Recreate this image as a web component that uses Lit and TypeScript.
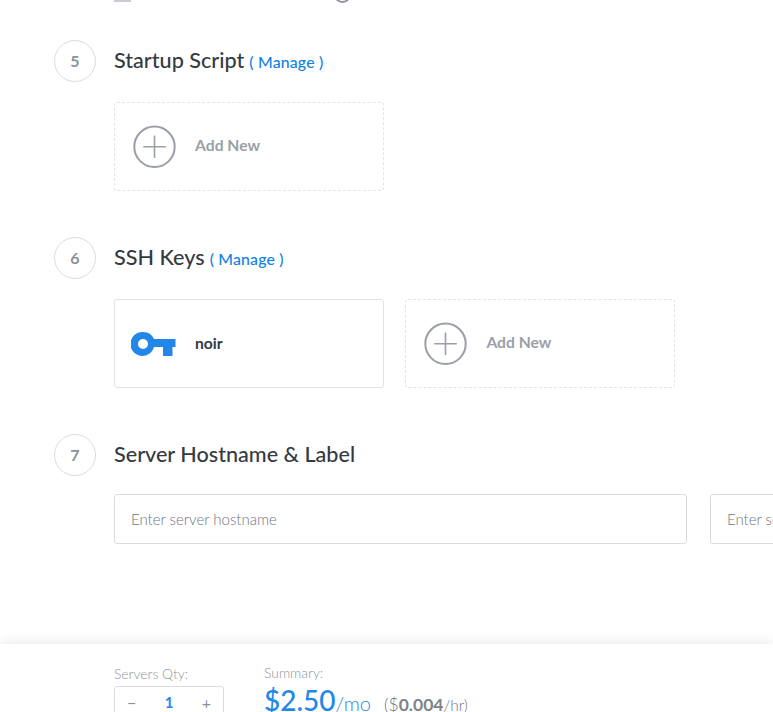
import { LitElement, html, css } from "lit";
import { customElement } from "lit/decorators.js";

const plus = html`<svg class="plus" width="44" height="44" viewBox="0 0 44 44" fill="none">
  <circle cx="21.5" cy="21.8" r="20.2" stroke="#9a9fa8" stroke-width="2"/>
  <path d="M21.5 10.5V33M10.3 21.8H32.8" stroke="#9a9fa8" stroke-width="1.6"/>
</svg>`;

const key = html`<svg width="45" height="24" viewBox="0 0 45 24">
  <path fill="#2387ea" fill-rule="evenodd" d="M12 0a12 12 0 0 1 11 7H44.500v8h-3v9H32V15H23A12 12 0 1 1 12 0Zm0 7a5 5 0 1 0 0 10a5 5 0 0 0 0-10Z"/>
</svg>`;

@customElement("app-root")
export class AppRoot extends LitElement {
  static styles = css`
    :host { display: block; }
    .page {
      width: 773px; height: 712px; overflow: hidden; background: #fff;
      display: flex; flex-direction: column;
      font-family: "Lato", "Liberation Sans", sans-serif;
      color: #353a42;
    }
    .main { height: 644px; flex: none; display: flex; flex-direction: column; box-sizing: border-box; }
    .clipped { height: 40px; flex: none; padding-left: 114px; display: flex; gap: 203px; overflow: hidden; }
    .clip-box { width: 17px; height: 2px; background: #c9ccd1; }
    .clip-ring { width: 13px; height: 13px; border: 2px solid #8f949c; border-radius: 50%; margin-top: -14px; }
    .section { display: flex; flex-direction: column; padding-left: 54px; }
    .section + .section { margin-top: 46px; }
    .head { display: flex; align-items: center; height: 42px; gap: 18px; }
    .num {
      width: 42px; height: 42px; box-sizing: border-box; border: 1px solid #d8dde2; border-radius: 50%;
      display: flex; align-items: center; justify-content: center; padding-bottom: 1px;
      font-size: 16px; font-weight: 700; color: #8a9199; flex: none;
    }
    .title { font-size: 21.6px; font-weight: 500; color: #353a42; white-space: nowrap; padding-bottom: 2px; }
    .manage { font-size: 15.8px; font-weight: 500; color: #0f82e6; margin-left: 5px; letter-spacing: 0.2px; position: relative; top: 0; }
    .cards { display: flex; gap: 21.4px; padding-left: 60px; margin-top: 20px; }
    .card {
      width: 270px; height: 89px; box-sizing: border-box; border-radius: 3px;
      display: flex; align-items: center; font-size: 15.7px; font-weight: 700;
    }
    .card.solid { border: 1px solid #dfe2e6; padding-left: 16px; color: #353a42; }
    .card.dashed { border: 1px dashed #e2e4e7; padding-left: 18px; color: #9a9fa8; }
    .card .icon { width: 45px; display: flex; }
    .card.dashed .icon { width: 44px; }
    .card .label { margin-left: 18px; padding-bottom: 3px; }
    .card.solid .label { margin-left: 19px; padding-bottom: 2px; }
    .fields { display: flex; gap: 23px; padding-left: 60px; margin-top: 18px; }
    .field {
      width: 573px; height: 50px; flex: none; box-sizing: border-box; border: 1px solid #d9dcdf; border-radius: 3px;
      padding-left: 16px; padding-bottom: 1px; display: flex; align-items: center; font-size: 15px; font-weight: 300; color: #6f757d;
    }
    .footer {
      flex: 1; display: flex; gap: 40px; padding-left: 114px; background: #fff;
      box-shadow: 0 -3px 10px rgba(0,0,0,.07); position: relative;
    }
    .qty-col { width: 110px; padding-top: 21px; }
    .sum-col { padding-top: 20px; }
    .cap { font-size: 13.9px; font-weight: 300; color: #8f949a; line-height: 17px; }
    .stepper {
      margin-top: 4px; width: 110px; height: 50px; box-sizing: border-box; border: 1px solid #d9dcdf; border-radius: 3px;
      display: flex; justify-content: space-between; padding: 6px 12px 0; font-size: 16px; color: #8a9199;
    }
    .stepper b { color: #2387ea; font-size: 15px; font-weight: 700; }
    .price { display: flex; align-items: baseline; margin-top: 2px; color: #2387ea; white-space: nowrap; }
    .big { font-size: 28px; font-weight: 500; }
    .mo { font-size: 20px; font-weight: 300; color: #2f86da; }
    .hr { margin-left: 13px; font-size: 17.5px; font-weight: 300; color: #6f7379; }
    .hr b { font-weight: 700; color: #7f8389; }
    .hr span { font-size: 15.5px; }
  `;

  render() {
    return html`<div class="page">
      <div class="main">
        <div class="clipped"><div class="clip-box"></div><div class="clip-ring"></div></div>
        <div class="section">
          <div class="head"><div class="num">5</div><div class="title">Startup Script<span class="manage">( Manage )</span></div></div>
          <div class="cards">
            <div class="card dashed"><span class="icon">${plus}</span><span class="label">Add New</span></div>
          </div>
        </div>
        <div class="section">
          <div class="head"><div class="num">6</div><div class="title">SSH Keys<span class="manage">( Manage )</span></div></div>
          <div class="cards">
            <div class="card solid"><span class="icon">${key}</span><span class="label">noir</span></div>
            <div class="card dashed"><span class="icon">${plus}</span><span class="label">Add New</span></div>
          </div>
        </div>
        <div class="section">
          <div class="head"><div class="num">7</div><div class="title">Server Hostname &amp; Label</div></div>
          <div class="fields">
            <div class="field">Enter server hostname</div>
            <div class="field">Enter server label</div>
          </div>
        </div>
      </div>
      <div class="footer">
        <div class="qty-col">
          <div class="cap">Servers Qty:</div>
          <div class="stepper"><span>−</span><b>1</b><span>+</span></div>
        </div>
        <div class="sum-col">
          <div class="cap">Summary:</div>
          <div class="price"><span class="big">$2.50</span><span class="mo">/mo</span><span class="hr">($<b>0.004</b><span>/hr)</span></span></div>
        </div>
      </div>
    </div>`;
  }
}
